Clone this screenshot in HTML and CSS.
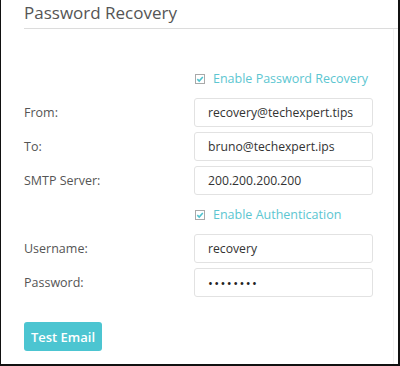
FILE: index.html
```html
<!DOCTYPE html>
<html lang="en">
<head>
    <meta charset="UTF-8">
    <title>Password Recovery</title>
    <link rel="stylesheet" href="styles.css">
</head>
<body>
    <div class="frame">
        <div class="panel">
            <h2 class="title">Password Recovery</h2>
            <form class="the-form">
                <span></span>
                <label class="check">
                    <svg width="10" height="10" viewBox="0 0 10 10"><rect x="0.5" y="0.5" width="9" height="9" fill="#fff" stroke="#a9a9a9"/><path d="M2.3 5.2 L4.2 7 L7.8 3" fill="none" stroke="#4fc3cf" stroke-width="1.6"/></svg>
                    Enable Password Recovery
                </label>

                <span class="label">From:</span>
                <input type="text" value="recovery@techexpert.tips">

                <span class="label">To:</span>
                <input type="text" value="bruno@techexpert.ips">

                <span class="label">SMTP Server:</span>
                <input type="text" value="200.200.200.200">

                <span></span>
                <label class="check">
                    <svg width="10" height="10" viewBox="0 0 10 10"><rect x="0.5" y="0.5" width="9" height="9" fill="#fff" stroke="#a9a9a9"/><path d="M2.3 5.2 L4.2 7 L7.8 3" fill="none" stroke="#4fc3cf" stroke-width="1.6"/></svg>
                    Enable Authentication
                </label>

                <span class="label">Username:</span>
                <input type="text" value="recovery">

                <span class="label">Password:</span>
                <input type="password" value="password">

                <button type="button" class="button">Test Email</button>
            </form>
        </div>
    </div>
</body>
</html>
```

FILE: styles.css
```css
*{
    margin: 0;
    padding: 0;
    box-sizing: border-box;
}
html,body{
    width: 100%;
    height: 100%;
    background-color: #fff;
    font-family: "Open Sans", "Noto Sans", sans-serif;
}
.frame{
    width: 400px;
    height: 366px;
    border-left: 1px solid #111;
    border-right: 2px solid #111;
    border-bottom: 2px solid #111;
    overflow: hidden;
}
.panel{
    height: 100%;
    margin-right: 4px;
    border-right: 1px solid #f2f2f2;
}
.title{
    margin-left: 23px;
    margin-right: -5px;
    height: 29px;
    padding-top: 1px;
    font-size: 17px;
    font-weight: 400;
    color: #555;
    border-bottom: 1px solid #dcdcdc;
    background-color: #fff;
    position: relative;
}
.the-form{
    display: grid;
    grid-template-columns: 170px 179px;
    grid-auto-rows: 29px;
    row-gap: 5px;
    padding: 35px 0 0 23px;
}
.label{
    display: flex;
    align-items: center;
    font-size: 12.5px;
    color: #555;
}
.check{
    display: flex;
    align-items: center;
    gap: 8px;
    padding-left: 1px;
    white-space: nowrap;
    font-size: 12.5px;
    color: #5cc6d1;
}
.check svg{
    display: block;
}
input{
    border: 1px solid #e2e2e2;
    border-radius: 3px;
    outline: none;
    padding-left: 13px;
    font-family: "Open Sans", "Noto Sans", sans-serif;
    font-size: 12.2px;
    color: #333;
    background-color: #fff;
}
input[type="password"]{
    font-size: 13px;
    letter-spacing: 1.4px;
    color: #222;
}
.button{
    grid-column: 1;
    margin-top: 20px;
    width: 78px;
    height: 29px;
    border: none;
    border-radius: 3px;
    background-color: #4cc5d1;
    color: #fff;
    font-family: "Open Sans", "Noto Sans", sans-serif;
    font-size: 13px;
    font-weight: 600;
}
```
